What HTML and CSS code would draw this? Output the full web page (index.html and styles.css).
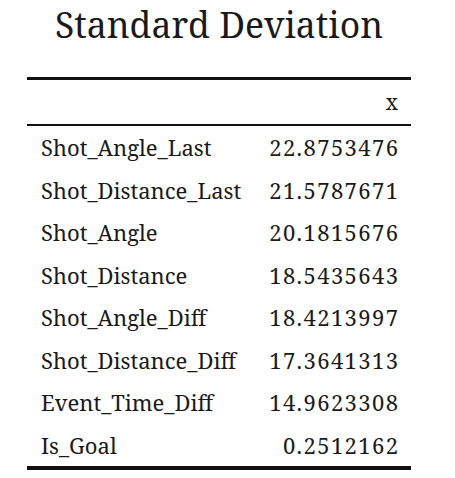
FILE: index.html
```html
<!DOCTYPE html>
<html>
<head>
<meta charset="utf-8">
<link rel="stylesheet" href="styles.css">
</head>
<body>
<div class="wrap">
  <h1 class="title">Standard Deviation</h1>
  <table class="tbl">
    <thead>
      <tr><th class="stub"></th><th class="num">x</th></tr>
    </thead>
    <tbody>
      <tr><td>Shot_Angle_Last</td><td class="num val">22.8753476</td></tr>
      <tr><td>Shot_Distance_Last</td><td class="num val">21.5787671</td></tr>
      <tr><td>Shot_Angle</td><td class="num val">20.1815676</td></tr>
      <tr><td>Shot_Distance</td><td class="num val">18.5435643</td></tr>
      <tr><td>Shot_Angle_Diff</td><td class="num val">18.4213997</td></tr>
      <tr><td>Shot_Distance_Diff</td><td class="num val">17.3641313</td></tr>
      <tr><td>Event_Time_Diff</td><td class="num val">14.9623308</td></tr>
      <tr><td>Is_Goal</td><td class="num val">0.2512162</td></tr>
    </tbody>
  </table>
</div>
</body>
</html>
```

FILE: styles.css
```css
html, body {
  margin: 0;
  padding: 0;
  background: #ffffff;
}
body {
  font-family: "Noto Serif", "DejaVu Serif", serif;
  color: #1a1a1a;
}
.wrap {
  width: 384px;
  margin-left: 27px;
}
.title {
  margin: 0;
  height: 77px;
  padding-top: 2px;
  box-sizing: border-box;
  text-align: center;
  font-weight: normal;
  font-size: 35.5px;
  line-height: 44px;
}
.tbl {
  width: 384px;
  border-collapse: separate;
  border-spacing: 0;
  border-top: 3px solid #111;
  border-bottom: 4px solid #111;
}
.tbl th {
  padding: 0 13px 0 14px;
  line-height: 44px;
  font-weight: normal;
  font-size: 21px;
  border-bottom: 2px solid #111;
  text-align: left;
  vertical-align: middle;
}
.tbl td {
  padding: 0 13px 0 14px;
  line-height: 42.5px;
  font-size: 22px;
  vertical-align: top;
  white-space: nowrap;
}
.tbl .num {
  text-align: right;
}
.tbl .val {
  letter-spacing: 1.4px;
  padding-right: 11.6px;
}
```
